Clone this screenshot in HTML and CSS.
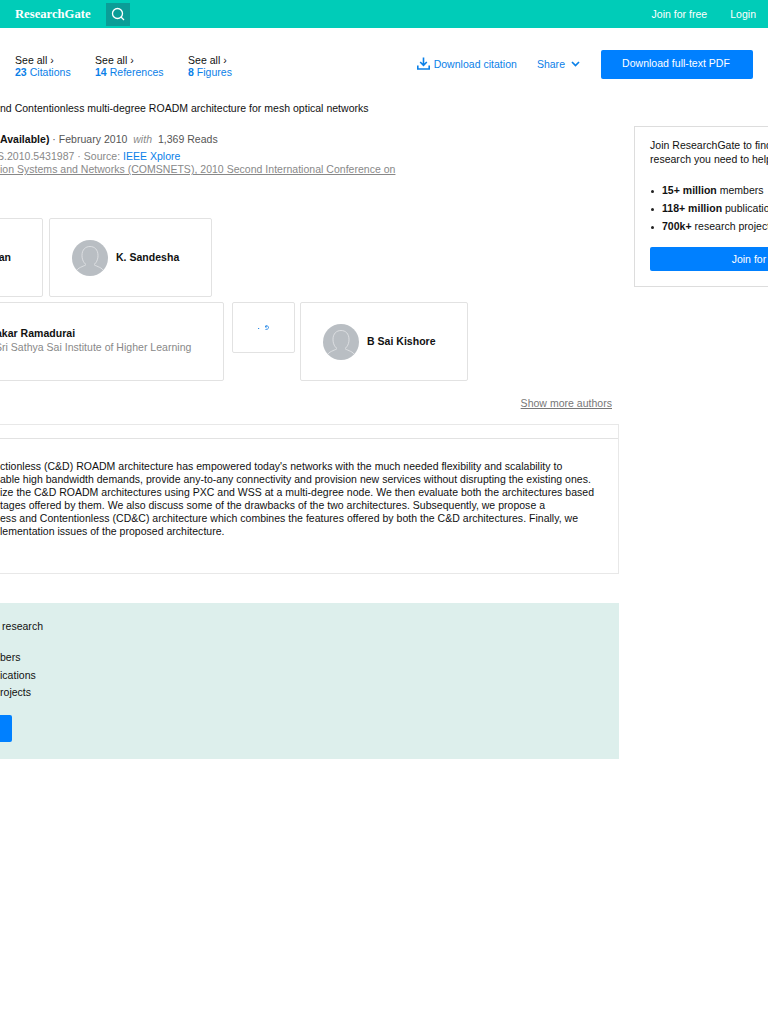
FILE: index.html
```html
<!DOCTYPE html>
<html lang="en">
<head>
    <meta charset="UTF-8">
    <title>ResearchGate publication</title>
    <link rel="stylesheet" href="styles.css">
</head>
<body>
    <header class="topbar">
        <a class="logo">ResearchGate</a>
        <span class="search-box">
            <svg width="14" height="14" viewBox="0 0 14 14" fill="none" stroke="#fff" stroke-width="1.3"><circle cx="6.500" cy="6.500" r="5"/><path d="M10 10l3 3"/></svg>
        </span>
        <nav class="top-links">
            <a>Join for free</a>
            <a>Login</a>
        </nav>
    </header>

    <div class="subnav">
        <div class="stat stat-citations"><span>See all ›</span><a><b>23</b> Citations</a></div>
        <div class="stat stat-references"><span>See all ›</span><a><b>14</b> References</a></div>
        <div class="stat"><span>See all ›</span><a><b>8</b> Figures</a></div>
        <div class="actions">
            <a class="action-citation">
                <svg width="13" height="13" viewBox="0 0 13 13" fill="none" stroke="#0a80e8" stroke-width="1.6"><path d="M6.500 0.500v7.500M3.200 5l3.300 3.300L9.800 5"/><path d="M0.800 8.500v3.500h11.400v-3.500"/></svg>
                Download citation
            </a>
            <a class="action-share">Share
                <svg width="9" height="6" viewBox="0 0 9 6" fill="none" stroke="#0a80e8" stroke-width="1.7"><path d="M1 1l3.500 3.500L8 1"/></svg>
            </a>
            <a class="btn-download">Download full-text PDF</a>
        </div>
    </div>

    <div class="layout">
        <main class="main">
            <h1 class="title">nd Contentionless multi-degree ROADM architecture for mesh optical networks</h1>
            <p class="meta"><b>Available)</b> · February 2010 &nbsp;<i>with</i>&nbsp; 1,369 Reads</p>
            <p class="doi">S.2010.5431987 · Source: <a>IEEE Xplore</a></p>
            <p class="venue">ion Systems and Networks (COMSNETS), 2010 Second International Conference on</p>

            <div class="author-row row-one">
                <div class="author-card card-first"><b>an</b></div>
                <div class="author-card card-sandesha">
                    <svg class="avatar" viewBox="0 0 36 36"><circle cx="18" cy="18" r="18" fill="#b9bec3"/><path d="M5 30c2-3 8-4 9-5.500 0 0-4-2.500-4-9 0-6 3.500-9 8-9s8 3 8 9c0 6.500-4 9-4 9 1 1.500 7 2.500 9 5.500" fill="none" stroke="#e4e6e8" stroke-width="0.800"/></svg>
                    <b>K. Sandesha</b>
                </div>
            </div>
            <div class="author-row row-two">
                <div class="author-card card-ramadurai">
                    <div class="author-info"><b>akar Ramadurai</b><span>Sri Sathya Sai Institute of Higher Learning</span></div>
                </div>
                <div class="author-card card-more">
                    <svg width="13" height="6" viewBox="0 0 13 6" fill="none" stroke="#2b8be8" stroke-width="1"><path d="M1 3.500h1.200"/><path d="M8 1.500c2-1 3.500-0.500 3.500 1s-1.500 2-3 2M10 0.800l-2 0.700 1.500 1.300"/></svg>
                </div>
                <div class="author-card card-kishore">
                    <svg class="avatar" viewBox="0 0 36 36"><circle cx="18" cy="18" r="18" fill="#b9bec3"/><path d="M5 30c2-3 8-4 9-5.500 0 0-4-2.500-4-9 0-6 3.500-9 8-9s8 3 8 9c0 6.500-4 9-4 9 1 1.500 7 2.500 9 5.500" fill="none" stroke="#e4e6e8" stroke-width="0.800"/></svg>
                    <b>B Sai Kishore</b>
                </div>
            </div>

            <div class="more-authors"><a>Show more authors</a></div>

            <section class="abstract">
                <div class="abstract-head"></div>
                <div class="abstract-body">
                    <p>ctionless (C&amp;D) ROADM architecture has empowered today's networks with the much needed flexibility and scalability to</p>
                    <p>able high bandwidth demands, provide any-to-any connectivity and provision new services without disrupting the existing ones.</p>
                    <p>ize the C&amp;D ROADM architectures using PXC and WSS at a multi-degree node. We then evaluate both the architectures based</p>
                    <p>tages offered by them. We also discuss some of the drawbacks of the two architectures. Subsequently, we propose a</p>
                    <p>ess and Contentionless (CD&amp;C) architecture which combines the features offered by both the C&amp;D architectures. Finally, we</p>
                    <p>lementation issues of the proposed architecture.</p>
                </div>
            </section>

            <section class="join-panel">
                <p class="join-lead">research</p>
                <ul class="join-list">
                    <li>bers</li>
                    <li>ications</li>
                    <li>rojects</li>
                </ul>
                <a class="join-btn"></a>
            </section>
        </main>

        <aside class="side">
            <p class="side-lead">Join ResearchGate to find the<br>research you need to help your work.</p>
            <ul class="side-list">
                <li><b>15+ million</b> members</li>
                <li><b>118+ million</b> publications</li>
                <li><b>700k+</b> research projects</li>
            </ul>
            <a class="side-btn">Join for free</a>
        </aside>
    </div>
</body>
</html>
```

FILE: styles.css
```css
html, body {
    margin: 0;
    height: 1024px;
    overflow: hidden;
    background-color: #fff;
}
body {
    font-family: "Liberation Sans", Arial, sans-serif;
    font-size: 10.5px;
    letter-spacing: 0.02px;
    color: #111;
}
p, h1, ul {
    margin: 0;
    padding: 0;
}
ul {
    list-style: none;
}

/* top bar */
.topbar {
    display: flex;
    align-items: center;
    height: 28px;
    padding-left: 15px;
    background-color: #00ccb8;
    color: #fff;
}
.logo {
    width: 91px;
    font-family: "Liberation Serif", serif;
    font-size: 12.6px;
    font-weight: bold;
}
.search-box {
    display: flex;
    align-items: center;
    justify-content: center;
    width: 24px;
    height: 23px;
    background-color: #0a9d97;
}
.top-links {
    display: flex;
    gap: 23px;
    margin-left: auto;
    padding-right: 12px;
}

/* citations row */
.subnav {
    display: flex;
    height: 51px;
    padding: 22px 0 0 15px;
    box-sizing: border-box;
    line-height: 12px;
}
.stat {
    display: flex;
    flex-direction: column;
    padding-top: 4px;
    width: 93px;
}
.stat-citations {
    width: 80px;
}
.stat a {
    color: #0a80e8;
}
.actions {
    display: flex;
    align-items: flex-start;
    margin-left: auto;
    margin-right: 15px;
    color: #0a80e8;
}
.action-citation {
    display: flex;
    align-items: center;
    gap: 4px;
    height: 27px;
    margin-right: 20px;
}
.action-share {
    display: flex;
    align-items: center;
    gap: 6px;
    height: 27px;
    margin-right: 21px;
}
.btn-download {
    box-sizing: border-box;
    width: 152px;
    height: 29px;
    padding-right: 2px;
    line-height: 27px;
    border-radius: 2px;
    background-color: #0080ff;
    color: #fff;
    text-align: center;
}

/* page columns */
.layout {
    display: grid;
    grid-template-columns: 619px 252px;
    column-gap: 15px;
    padding-top: 23px;
}
.title {
    font-size: 10.5px;
    font-weight: normal;
    line-height: 13px;
    white-space: nowrap;
}
.meta {
    margin-top: 17px;
    line-height: 14px;
    color: #555;
    white-space: nowrap;
}
.meta b {
    color: #111;
}
.meta i {
    color: #888;
}
.doi {
    margin-top: 3px;
    margin-left: -3px;
    line-height: 14px;
    color: #888;
}
.doi a {
    color: #0a80e8;
}
.venue {
    line-height: 13px;
    color: #888;
    text-decoration: underline;
    white-space: nowrap;
}

/* authors */
.author-row {
    display: flex;
    align-items: flex-start;
    margin-left: -20px;
}
.row-one {
    gap: 6px;
    margin-top: 42px;
}
.row-two {
    margin-top: 5px;
}
.author-card {
    display: flex;
    align-items: center;
    box-sizing: border-box;
    height: 79px;
    border: 1px solid #e2e2e2;
    border-radius: 2px;
}
.author-card b {
    margin-bottom: 2px;
    color: #111;
}
.card-first {
    justify-content: flex-end;
    width: 63px;
    padding-right: 31px;
}
.card-sandesha {
    width: 163px;
    padding-left: 22px;
    gap: 8px;
}
.avatar {
    width: 36px;
    height: 36px;
    flex: none;
}
.card-ramadurai {
    width: 244px;
    padding: 0 0 4px 14px;
    margin-right: 8px;
}
.author-info {
    display: flex;
    flex-direction: column;
    white-space: nowrap;
    line-height: 14px;
}
.author-info span {
    color: #888;
}
.author-info b {
    margin: 0 0 0 1px;
}
.card-more {
    justify-content: center;
    width: 63px;
    height: 51px;
    margin-right: 5px;
}
.card-kishore {
    width: 168px;
    padding-left: 22px;
    gap: 8px;
}
.more-authors {
    padding-right: 7px;
    margin-top: 16px;
    line-height: 13px;
    text-align: right;
}
.more-authors a {
    color: #777;
    text-decoration: underline;
}

/* abstract */
.abstract {
    height: 150px;
    margin-top: 14px;
    margin-left: -10px;
    box-sizing: border-box;
    border: 1px solid #e8e8e8;
}
.abstract-head {
    height: 13px;
    border-bottom: 1px solid #e2e2e2;
}
.abstract-body {
    padding: 21px 0 0 9px;
    line-height: 13px;
    white-space: nowrap;
}

/* join panels */
.join-panel {
    height: 156px;
    margin-top: 29px;
    padding-top: 17px;
    box-sizing: border-box;
    background-color: #ddefec;
    line-height: 13px;
}
.join-lead {
    padding-left: 2px;
}
.join-list {
    margin-top: 18px;
}
.join-list li {
    margin-bottom: 4.5px;
}
.join-btn {
    display: block;
    width: 12px;
    height: 27px;
    margin-top: 15.500px;
    border-radius: 0 2px 2px 0;
    background-color: #0080ff;
}
.side {
    align-self: start;
    height: 161px;
    margin-top: 24px;
    padding: 11px 16px 0 15px;
    box-sizing: border-box;
    border: 1px solid #ddd;
    line-height: 13px;
    white-space: nowrap;
}
.side-lead {
    line-height: 14px;
}
.side-list {
    margin-top: 18px;
}
.side-list li {
    position: relative;
    margin-bottom: 5px;
    padding-left: 12px;
}
.side-list li::before {
    content: "";
    position: absolute;
    left: 1px;
    top: 6px;
    width: 3px;
    height: 3px;
    border-radius: 50%;
    background-color: #222;
}
.side-btn {
    display: block;
    height: 24px;
    margin-top: 14px;
    line-height: 24px;
    border-radius: 2px;
    background-color: #0080ff;
    color: #fff;
    text-align: center;
}
```
